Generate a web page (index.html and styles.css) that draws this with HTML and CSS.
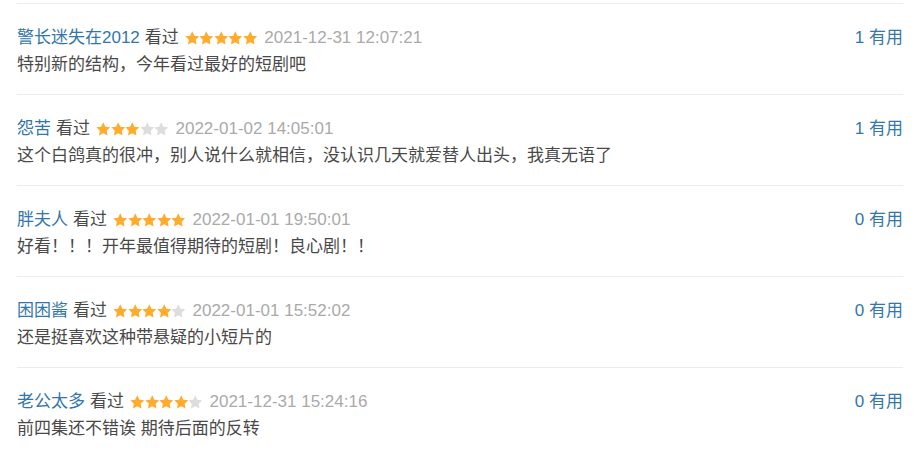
FILE: index.html
```html
<!DOCTYPE html>
<html lang="zh-CN">
<head>
    <meta charset="UTF-8">
    <title>短评</title>
    <link rel="stylesheet" href="styles.css">
</head>
<body>
    <svg width="0" height="0" class="defs">
        <symbol id="star" viewBox="0 0 24 23">
            <path d="M12 0.5L15.5 7.6 23.4 8.8 17.7 14.3 19 22.2 12 18.5 5 22.2 6.3 14.3 0.6 8.8 8.5 7.6z"/>
        </symbol>
    </svg>

    <div class="comments">
        <div class="comment">
            <div class="comment-info">
                <a href="#" class="user">警长迷失在2012</a>
                <span class="seen">看过</span>
                <span class="stars">
                    <svg class="on"><use href="#star"/></svg><svg class="on"><use href="#star"/></svg><svg class="on"><use href="#star"/></svg><svg class="on"><use href="#star"/></svg><svg class="on"><use href="#star"/></svg>
                </span>
                <span class="time">2021-12-31 12:07:21</span>
                <span class="votes">1 有用</span>
            </div>
            <p class="text">特别新的结构，今年看过最好的短剧吧</p>
        </div>

        <div class="comment">
            <div class="comment-info">
                <a href="#" class="user">怨苦</a>
                <span class="seen">看过</span>
                <span class="stars">
                    <svg class="on"><use href="#star"/></svg><svg class="on"><use href="#star"/></svg><svg class="on"><use href="#star"/></svg><svg><use href="#star"/></svg><svg><use href="#star"/></svg>
                </span>
                <span class="time">2022-01-02 14:05:01</span>
                <span class="votes">1 有用</span>
            </div>
            <p class="text">这个白鸽真的很冲，别人说什么就相信，没认识几天就爱替人出头，我真无语了</p>
        </div>

        <div class="comment">
            <div class="comment-info">
                <a href="#" class="user">胖夫人</a>
                <span class="seen">看过</span>
                <span class="stars">
                    <svg class="on"><use href="#star"/></svg><svg class="on"><use href="#star"/></svg><svg class="on"><use href="#star"/></svg><svg class="on"><use href="#star"/></svg><svg class="on"><use href="#star"/></svg>
                </span>
                <span class="time">2022-01-01 19:50:01</span>
                <span class="votes">0 有用</span>
            </div>
            <p class="text">好看！！！开年最值得期待的短剧！良心剧！！</p>
        </div>

        <div class="comment">
            <div class="comment-info">
                <a href="#" class="user">困困酱</a>
                <span class="seen">看过</span>
                <span class="stars">
                    <svg class="on"><use href="#star"/></svg><svg class="on"><use href="#star"/></svg><svg class="on"><use href="#star"/></svg><svg class="on"><use href="#star"/></svg><svg><use href="#star"/></svg>
                </span>
                <span class="time">2022-01-01 15:52:02</span>
                <span class="votes">0 有用</span>
            </div>
            <p class="text">还是挺喜欢这种带悬疑的小短片的</p>
        </div>

        <div class="comment">
            <div class="comment-info">
                <a href="#" class="user">老公太多</a>
                <span class="seen">看过</span>
                <span class="stars">
                    <svg class="on"><use href="#star"/></svg><svg class="on"><use href="#star"/></svg><svg class="on"><use href="#star"/></svg><svg class="on"><use href="#star"/></svg><svg><use href="#star"/></svg>
                </span>
                <span class="time">2021-12-31 15:24:16</span>
                <span class="votes">0 有用</span>
            </div>
            <p class="text">前四集还不错诶 期待后面的反转</p>
        </div>
    </div>
</body>
</html>
```

FILE: styles.css
```css
/* Comment list */
body {
    margin: 0;
    background-color: #fff;
    font-family: "Liberation Sans", Arial, "Noto Sans CJK SC", sans-serif;
    font-size: 17px;
    color: #494949;
}
.defs {
    position: absolute;
}
.comments {
    padding: 3px 16px 0 17px;
}
.comment {
    border-top: 1px solid #ececec;
    padding: 20px 0 16px;
}
.comment-info {
    display: flex;
    align-items: center;
    line-height: 27px;
    white-space: nowrap;
}
.user {
    color: #3377aa;
    text-decoration: none;
}
.seen {
    margin-left: 5px;
}
.stars {
    display: flex;
    margin-left: 6px;
    padding-top: 1px;
}
.stars svg {
    width: 14.5px;
    height: 14px;
    fill: #dddddd;
}
.stars svg.on {
    fill: #ffac2d;
}
.time {
    margin-left: 7px;
    color: #aaaaaa;
}
.votes {
    margin-left: auto;
    color: #3377aa;
}
.text {
    margin: 0;
    line-height: 27px;
}
```
